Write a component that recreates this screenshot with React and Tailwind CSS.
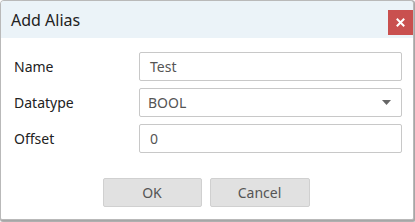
export default function App() {
  const font = { fontFamily: '"Noto Sans", "Open Sans", sans-serif' };
  return (
    <div className="w-[415px] h-[222px] bg-white" style={font}>
      <div className="w-[414px] h-[220px] border border-[#b9b9b9] rounded-t-[4px] rounded-b-[2px] bg-white shadow-[1px_1px_1px_1px_rgba(0,0,0,0.35)] flex flex-col overflow-hidden">
        <div className="h-[37px] bg-[#ebf3f8] flex items-center justify-between pl-[10px] pr-0">
          <span className="text-[16px] text-[#222] leading-none">Add Alias</span>
          <button className="w-[25px] h-[25px] bg-[#c9504f] flex items-center justify-center mt-[6px]">
            <svg width="9" height="9" viewBox="0 0 9 9">
              <path d="M1.5 1.5 L7.5 7.5 M7.5 1.5 L1.5 7.5" stroke="white" strokeWidth="2" strokeLinecap="square" />
            </svg>
          </button>
        </div>
        <div className="flex flex-col gap-[7px] pt-[14px] pl-[13px] pr-[11px]">
          <div className="flex items-center">
            <span className="w-[125px] text-[14px] text-[#222]">Name</span>
            <div className="flex-1 h-[29px] border border-[#c8c8c8] rounded-[2px] flex items-center pl-[10px] text-[14px] text-[#555]">Test</div>
          </div>
          <div className="flex items-center">
            <span className="w-[125px] text-[14px] text-[#222]">Datatype</span>
            <div className="flex-1 h-[29px] border border-[#c8c8c8] rounded-[2px] flex items-center justify-between pl-[8px] pr-[10px] text-[14px] text-[#555]">
              <span>BOOL</span>
              <svg width="9" height="5" viewBox="0 0 9 5"><path d="M0 0 L9 0 L4.5 5 Z" fill="#666" /></svg>
            </div>
          </div>
          <div className="flex items-center">
            <span className="w-[125px] text-[14px] text-[#222]">Offset</span>
            <div className="flex-1 h-[29px] border border-[#c8c8c8] rounded-[2px] flex items-center pl-[10px] text-[14px] text-[#555]">0</div>
          </div>
        </div>
        <div className="flex justify-center gap-[8px] mt-[25px] pr-[2px]">
          <button className="w-[99px] h-[29px] bg-[#e1e1e1] border border-[#d0d0d0] rounded-[2px] text-[14px] text-[#555]">OK</button>
          <button className="w-[100px] h-[29px] bg-[#e1e1e1] border border-[#d0d0d0] rounded-[2px] text-[14px] text-[#555]">Cancel</button>
        </div>
      </div>
    </div>
  );
}
